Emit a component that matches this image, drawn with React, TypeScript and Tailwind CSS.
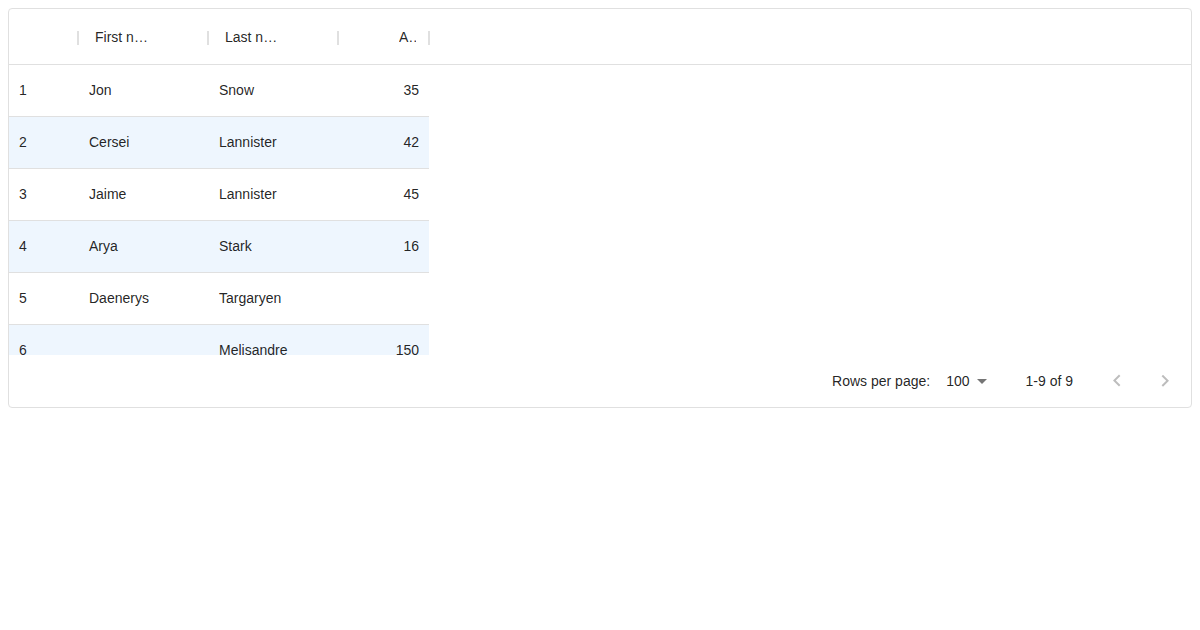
import React from "react";

const rows: { id: number; first: string; last: string; age: number | null }[] = [
  { id: 1, first: "Jon", last: "Snow", age: 35 },
  { id: 2, first: "Cersei", last: "Lannister", age: 42 },
  { id: 3, first: "Jaime", last: "Lannister", age: 45 },
  { id: 4, first: "Arya", last: "Stark", age: 16 },
  { id: 5, first: "Daenerys", last: "Targaryen", age: null },
  { id: 6, first: "", last: "Melisandre", age: 150 },
  { id: 7, first: "Ferrara", last: "Clifford", age: 44 },
  { id: 8, first: "Rossini", last: "Frances", age: 36 },
  { id: 9, first: "Harvey", last: "Roxie", age: 65 },
];

function Sep() {
  return <span className="absolute right-0 top-[22px] h-[14px] w-[2px] bg-[#e0e0e0]" />;
}

export default function App() {
  return (
    <div
      className="w-[1200px] h-[630px] bg-white p-2 text-[14px] text-[rgba(0,0,0,0.87)]"
      style={{ fontFamily: "'Liberation Sans', Arial, sans-serif" }}
    >
      <div className="h-[400px] border border-[#e0e0e0] rounded flex flex-col overflow-hidden">
        {/* header */}
        <div className="h-[56px] shrink-0 border-b border-[#e0e0e0] flex">
          <div className="relative w-[70px] h-full">
            <Sep />
          </div>
          <div className="relative w-[130px] h-full flex items-center pl-4 pt-[2px]">
            <span className="w-[57px] truncate">First name</span>
            <Sep />
          </div>
          <div className="relative w-[130px] h-full flex items-center pl-4 pt-[2px]">
            <span className="w-[57px] truncate">Last name</span>
            <Sep />
          </div>
          <div className="relative w-[91px] h-full flex items-center justify-end pr-[14px] pt-[2px]">
            <span className="w-[17px] truncate">Age</span>
            <Sep />
          </div>
        </div>
        {/* body */}
        <div className="h-[290px] shrink-0 overflow-hidden">
          {rows.map((r, i) => (
            <div
              key={r.id}
              className={`w-[420px] h-[52px] flex items-center border-b border-[#e0e0e0] ${
                i % 2 === 1 ? "bg-[#eef6fe]" : "bg-white"
              }`}
            >
              <div className="w-[70px] px-[10px]">{r.id}</div>
              <div className="w-[130px] px-[10px]">{r.first}</div>
              <div className="w-[130px] px-[10px]">{r.last}</div>
              <div className="w-[90px] px-[10px] text-right">{r.age ?? ""}</div>
            </div>
          ))}
        </div>
        {/* footer */}
        <div className="h-[52px] shrink-0 flex items-center justify-end pr-[6px]">
          <span>Rows per page:</span>
          <div className="relative ml-2 mr-8 pl-2 pr-6 flex items-center">
            <span>100</span>
            <svg className="absolute right-0 top-1/2 -translate-y-1/2" width="24" height="24" viewBox="0 0 24 24">
              <path d="M7 10l5 5 5-5z" fill="rgba(0,0,0,0.54)" />
            </svg>
          </div>
          <span>1-9 of 9</span>
          <div className="ml-[24px] flex gap-2">
            <div className="w-10 h-10 flex items-center justify-center">
              <svg width="24" height="24" viewBox="0 0 24 24">
                <path d="M15.41 16.09l-4.58-4.59 4.58-4.59L14 5.5l-6 6 6 6z" fill="rgba(0,0,0,0.26)" />
              </svg>
            </div>
            <div className="w-10 h-10 flex items-center justify-center">
              <svg width="24" height="24" viewBox="0 0 24 24">
                <path d="M8.59 16.34l4.58-4.59-4.58-4.59L10 5.75l6 6-6 6z" fill="rgba(0,0,0,0.26)" />
              </svg>
            </div>
          </div>
        </div>
      </div>
    </div>
  );
}
